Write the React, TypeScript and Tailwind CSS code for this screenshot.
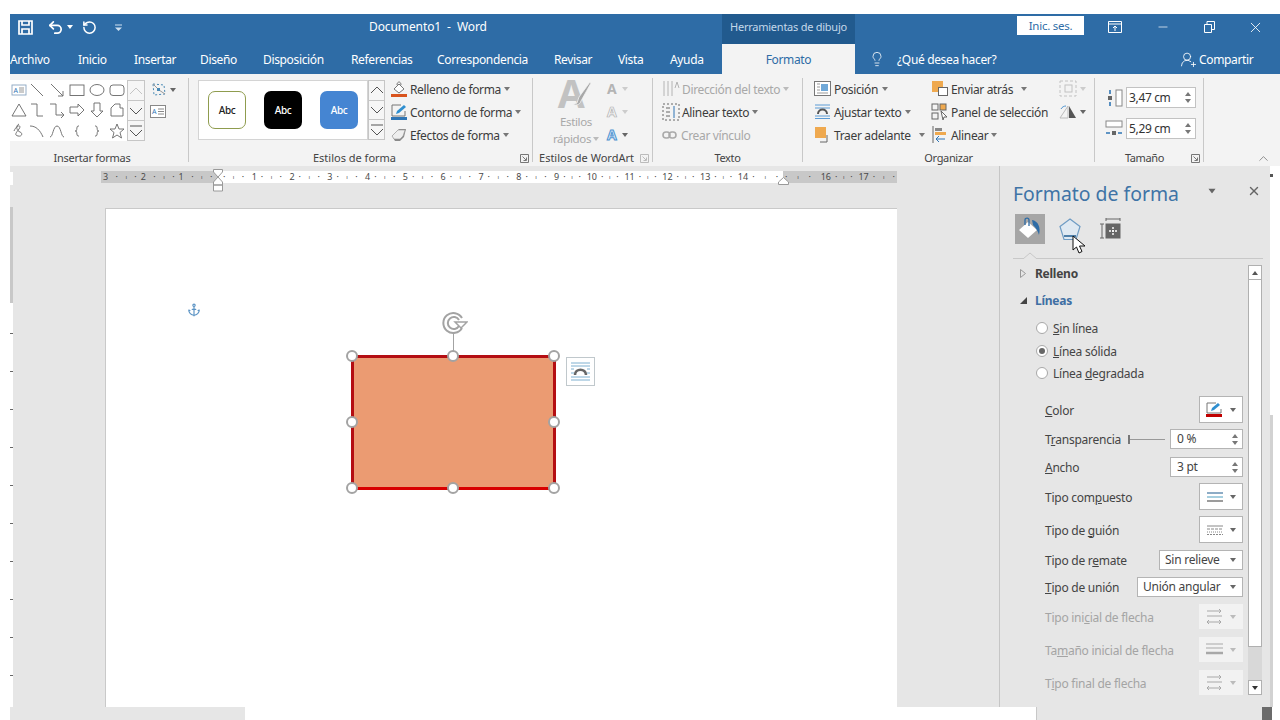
import type { ReactNode } from "react";
import { Anchor, ChevronUp, Lightbulb, Minus, RotateCcw, Undo2, UserRoundPlus, X } from "lucide-react";

function Caret({ className = "text-[#666]" }: { className?: string }) {
    return (
        <svg width="6" height="4" viewBox="0 0 6 4" className={`inline-block shrink-0 ${className}`}>
            <path d="M0 0h6L3 4z" fill="currentColor" />
        </svg>
    );
}

function Launcher({ dim = false }: { dim?: boolean }) {
    return (
        <svg width="9" height="9" viewBox="0 0 9 9" className="shrink-0" stroke={dim ? "#bbb" : "#777"} fill="none">
            <path d="M.5.5h8v8h-8z" />
            <path d="M2.5 2.5l3.5 3.5M6.5 3.5v3h-3" />
        </svg>
    );
}

const shapeIcons: ReactNode[] = [
    <g key="box"><rect x="1" y="3" width="14" height="10" stroke="#8aa5c0" fill="#fff" /><text x="2.5" y="10.5" fontSize="7" fill="#2f75b5" stroke="none">A</text><path d="M8 6h5M8 8h5M8 10h5" stroke="#8a8a8a" /></g>,
    <path key="line" d="M2 2l12 12" />,
    <g key="arrow"><path d="M2 2l12 12" /><path d="M14 9v5H9" /></g>,
    <rect key="rect" x="1" y="3" width="14" height="10.5" />,
    <ellipse key="oval" cx="8" cy="8" rx="7" ry="5.5" />,
    <rect key="round" x="1" y="3" width="14" height="10.5" rx="3" />,
    <path key="tri" d="M8 2l7 12H1z" />,
    <path key="elbow" d="M2 2h6v12h6" />,
    <g key="elbowa"><path d="M1 2h6v11h7" /><path d="M12 10l3 3-3 3" /></g>,
    <path key="right" d="M1 5h8V2l6 6-6 6v-3H1z" />,
    <path key="down" d="M5 1h6v8h3l-6 6-6-6h3z" />,
    <path key="flow" d="M2 14V6l4-4h5v4h3v8z" />,
    <path key="scrib" d="M3 8c3-7 8-6 5-2S3 12 7 13s5-3 2-4-5-6-1-8" />,
    <path key="curve" d="M1 3c6 0 10 4 13 11" />,
    <path key="scurve" d="M1 14C4 14 4 3 8 3s4 11 7 11" />,
    <path key="lb" d="M10 3H9C7.500 3 8 7 7.500 7.500S6 8 6 8s1 0 1.500.5S7.500 13 9 13h1" />,
    <path key="rb" d="M6 3h1c1.500 0 1 4 1.500 4.500S10 8 10 8s-1 0-1.500.5S8.500 13 7 13H6" />,
    <path key="star" d="M8 1l2 5h5l-4 3.500 1.500 5.500L8 12l-4.500 3L5 9.500 1 6h5z" />,
];

function SpinCell({ kind, dim = false }: { kind: "up" | "down" | "more"; dim?: boolean }) {
    const stroke = dim ? "#c4c4c4" : "#555";
    return (
        <div className="flex flex-1 items-center justify-center border border-[#c6c6c6] bg-[#f6f6f6] -mt-px first:mt-0">
            <svg width="14" height="14" viewBox="0 0 14 14" fill="none" stroke={stroke}>
                {kind === "more" && <path d="M1 2h12" />}
                <path d={kind === "up" ? "M1 10l6-6 6 6" : kind === "down" ? "M1 4l6 6 6-6" : "M1 6l6 6 6-6"} />
            </svg>
        </div>
    );
}

function FillIcon() {
    return (
        <svg width="18" height="18" viewBox="0 0 18 18" fill="none">
            <path d="M4 9l5-5 5 5-5 4z" fill="#fff" stroke="#777" />
            <path d="M7 5c0-4 4-4 4 0" stroke="#777" />
            <rect x="1" y="14" width="16" height="3" fill="#d9541e" />
        </svg>
    );
}

function OutlineIcon() {
    return (
        <svg width="18" height="18" viewBox="0 0 18 18" fill="none">
            <path d="M2 2h9M2 2v11h13V8" stroke="#777" />
            <path d="M6 11l1-3 7-6 2 2-7 6z" fill="#2f8fd0" />
            <rect x="1" y="14" width="16" height="3" fill="#2f75b5" />
        </svg>
    );
}

function EffectIcon() {
    return (
        <svg width="18" height="18" viewBox="0 0 18 18">
            <path d="M2 10l7-7h7l-2 8-4 4H5z" fill="#8a8a8a" />
            <path d="M2 10l6-6h7l-2 6-3 3H4z" fill="#eee" stroke="#999" strokeWidth=".6" />
        </svg>
    );
}

function StyleRow({ icon, label, caret = true, dim = false, gap = "gap-[3px]" }: { icon: ReactNode; label: string; caret?: boolean; dim?: boolean; gap?: string }) {
    return (
        <div className={`flex h-[23px] items-center whitespace-nowrap ${gap} ${dim ? "text-[#a8a8a8]" : "text-[#3c3c3c]"}`}>
            {icon}
            <span className="mt-[2px]">{label}</span>
            {caret && <Caret className={dim ? "ml-[1px] text-[#bbb]" : "ml-[1px] text-[#777]"} />}
        </div>
    );
}

function Group({ width, label, launcher, dimLauncher, labelPad = "", children }: { width: string; label: string; launcher?: boolean; dimLauncher?: boolean; labelPad?: string; children: ReactNode }) {
    return (
        <div className={`flex h-full shrink-0 flex-col ${width}`}>
            <div className="flex h-[76px]">{children}</div>
            <div className={`flex h-[16px] items-center text-[11px] text-[#444] ${labelPad}`}>
                <span className="flex-1 whitespace-nowrap text-center">{label}</span>
                {launcher && <Launcher dim={dimLauncher} />}
            </div>
        </div>
    );
}

const Sep = () => <div className="my-[4px] w-px shrink-0 bg-[#c8c8c8]" />;

function AbcButton({ className }: { className: string }) {
    return <div className={`flex h-[38px] w-[38px] items-center justify-center rounded-[7px] text-[10px] font-medium ${className}`}>Abc</div>;
}

function SizeInput({ value, icon }: { value: string; icon: ReactNode }) {
    return (
        <div className="flex items-center gap-[3px]">
            {icon}
            <div className="flex h-[21px] w-[70px] items-center justify-between border border-[#c2c2c2] bg-white pl-[2px] pr-[4px] text-[12px] text-[#333]">
                {value}
                <Spin />
            </div>
        </div>
    );
}

function Spin() {
    return (
        <span className="flex flex-col gap-[3px] text-[#666]">
            <Caret className="rotate-180 text-[#777]" />
            <Caret className="text-[#777]" />
        </span>
    );
}

function RulerCell({ n, lead = false, w = "w-[37.8px]" }: { n?: number; lead?: boolean; w?: string }) {
    const bits = [<span key="a">·</span>, <span key="b" className="text-[6px]">ı</span>, <span key="c">·</span>];
    const num = n !== undefined ? <span key="n">{n}</span> : null;
    return (
        <div className={`flex shrink-0 items-center justify-between px-[2px] ${w}`}>
            {lead ? [num, ...bits] : [...bits, num]}
        </div>
    );
}

function PanelRow({ children, right, className }: { children: ReactNode; right?: ReactNode; className: string }) {
    return (
        <div className={`flex items-center justify-between pl-[32px] pr-[5px] ${className}`}>
            <span className="mt-[2px] whitespace-nowrap">{children}</span>
            {right}
        </div>
    );
}

function Radio({ children, on = false, className }: { children: ReactNode; on?: boolean; className: string }) {
    return (
        <div className={`flex h-[18px] items-center gap-[5px] pl-[23px] ${className}`}>
            <span className="flex h-[12px] w-[12px] items-center justify-center rounded-full border border-[#a8a8a8] bg-white">
                {on && <span className="h-[6px] w-[6px] rounded-full bg-[#666]" />}
            </span>
            <span className="mt-[2px]">{children}</span>
        </div>
    );
}

function DropBtn({ icon, dim = false }: { icon: ReactNode; dim?: boolean }) {
    return (
        <div className={`flex h-full w-[44px] items-center justify-center gap-[7px] ${dim ? "bg-[#f2f2f2]" : "border border-[#b4b4b4] bg-white"}`}>
            {icon}
            <Caret className={dim ? "text-[#bbb]" : "text-[#666]"} />
        </div>
    );
}

function ArrowsIcon() {
    return (
        <svg width="17" height="17" viewBox="0 0 17 17" fill="none" stroke="#a8a8a8">
            <path d="M1 3h14l-2-2M15 3l-2 2M1 8h15M1 14h14M3 12l-2 2 2 2M13 12l2 2-2 2" />
        </svg>
    );
}

function Handle({ className }: { className: string }) {
    return <div className={`absolute h-[12px] w-[12px] rounded-full border-2 border-[#a3a3a3] bg-white ${className}`} />;
}

export default function App() {
    return (
        <div className="flex h-[720px] w-[1280px] flex-col overflow-hidden bg-white pl-[10px] pt-[14px] font-['Noto_Sans','Open_Sans',sans-serif] text-[12px] tracking-[-0.35px] text-[#444]">
            {/* barra de titulo */}
            <div className="flex h-[30px] shrink-0 items-center bg-[#2e6ca6] pb-[4px] text-white">
                <div className="flex w-[359px] shrink-0 items-center pl-[8px]">
                    <svg width="15" height="15" viewBox="0 0 15 15" fill="none" stroke="#fff" strokeWidth="1.7">
                        <path d="M1 1h13v13H1z" />
                        <path d="M4 1v4h7V1M4 14V9h7v5" />
                    </svg>
                    <Undo2 size={17} strokeWidth={2.4} className="ml-[14px]" />
                    <Caret className="ml-[3px] text-white" />
                    <RotateCcw size={15} strokeWidth={2.4} className="ml-[9px]" />
                    <svg width="9" height="7" viewBox="0 0 9 7" className="ml-[17px]" fill="none" stroke="#cfe0f0">
                        <path d="M1 1h7" />
                        <path d="M1 3.500h7L4.500 7z" fill="#cfe0f0" stroke="none" />
                    </svg>
                </div>
                <div className="w-[353px] shrink-0 whitespace-pre tracking-[-0.1px]">Documento1  -  Word</div>
                <div className="-mb-[4px] flex w-[133px] shrink-0 items-center justify-center self-stretch bg-[#215a8e] pb-[4px] text-[11px] tracking-[-0.25px] text-[#c4d8ea]">Herramientas de dibujo</div>
                <div className="ml-[162px] mt-[2px] flex h-[19px] w-[67px] shrink-0 items-center justify-center self-start bg-white text-[11.5px] tracking-[-0.25px] text-[#2e6ca6]">Inic. ses.</div>
                <div className="ml-[8px] flex w-[46px] shrink-0 justify-center">
                    <svg width="14" height="12" viewBox="0 0 14 12" fill="none" stroke="#fff">
                        <path d="M.5.5h13v11H.5zM.5 3h13" />
                        <path d="M7 10V5M5 7l2-2 2 2" />
                    </svg>
                </div>
                <div className="ml-[2px] flex w-[46px] shrink-0 justify-center"><Minus size={14} strokeWidth={1.2} /></div>
                <div className="flex w-[46px] shrink-0 justify-center">
                    <svg width="11" height="12" viewBox="0 0 11 12" fill="none" stroke="#fff">
                        <path d="M.5 3.500h7v8h-7zM3 3.500V.5h7.500v8H7.500" />
                    </svg>
                </div>
                <div className="flex w-[46px] shrink-0 justify-center"><X size={17} strokeWidth={1.2} /></div>
            </div>

            {/* pestanas */}
            <div className="flex h-[30px] shrink-0 items-center bg-[#2e6ca6] text-white">
                <div className="mt-[2px] flex w-[712px] shrink-0 gap-[27px] whitespace-nowrap">
                    <span className="w-[41px]">Archivo</span>
                    <span className="w-[29px]">Inicio</span>
                    <span className="w-[39px]">Insertar</span>
                    <span className="w-[36px]">Diseño</span>
                    <span className="w-[61px]">Disposición</span>
                    <span className="w-[59px]">Referencias</span>
                    <span className="w-[90px]">Correspondencia</span>
                    <span className="w-[37px]">Revisar</span>
                    <span className="w-[25px]">Vista</span>
                    <span className="w-[34px]">Ayuda</span>
                </div>
                <div className="flex h-full w-[133px] shrink-0 items-center justify-center bg-[#f3f3f3] pt-[2px] text-[#2e6ca6]">Formato</div>
                <Lightbulb size={16} strokeWidth={1.2} className="ml-[14px]" />
                <span className="ml-[12px] mt-[2px] w-[97px] whitespace-nowrap">¿Qué desea hacer?</span>
                <UserRoundPlus size={17} strokeWidth={1.2} className="ml-[186px]" />
                <span className="ml-[2px] mt-[2px]">Compartir</span>
            </div>

            {/* cinta */}
            <div className="flex h-[92px] shrink-0 bg-[#f3f3f3]">
                <Group width="w-[178px]" label="Insertar formas" labelPad="pr-[14px] tracking-[-0.25px]">
                    <div className="mt-[6px] flex h-[61px]">
                        <div className="grid h-full w-[117px] grid-cols-[17px_repeat(5,20px)] grid-rows-3 bg-white">
                            {shapeIcons.map((icon, i) => (
                                <div key={i} className="flex items-center justify-center">
                                    <svg width="16" height="16" viewBox="0 0 16 16" fill="none" stroke="#666" strokeWidth=".9">{icon}</svg>
                                </div>
                            ))}
                        </div>
                        <div className="flex w-[18px] flex-col">
                            <SpinCell kind="up" dim />
                            <SpinCell kind="down" />
                            <SpinCell kind="more" />
                        </div>
                    </div>
                    <div className="ml-[5px] mt-[8px] flex flex-col gap-[8px]">
                        <div className="flex items-center gap-[3px]">
                            <svg width="17" height="15" viewBox="0 0 17 15" fill="none">
                                <path d="M3 2l11 1 1 9-11 1z" stroke="#4a8ab5" strokeDasharray="2 2" />
                                <path d="M3 2l6 6 6 4" stroke="#999" />
                                <rect x="7" y="6" width="3" height="3" fill="#4a8ab5" />
                            </svg>
                            <Caret />
                        </div>
                        <svg width="16" height="13" viewBox="0 0 16 13" fill="none" stroke="#888">
                            <rect x=".5" y=".5" width="15" height="12" fill="#fff" />
                            <text x="2" y="9" fontSize="7" fill="#2f75b5" stroke="none">A</text>
                            <path d="M8 4h6M8 6.500h6M8 9h6" />
                        </svg>
                    </div>
                </Group>
                <Sep />
                <Group width="w-[343px]" label="Estilos de forma" launcher labelPad="pr-[3px] tracking-normal">
                    <div className="ml-[9px] mt-[6px] flex h-[60px]">
                        <div className="flex h-full w-[170px] items-center gap-[18px] border border-[#d4d4d4] bg-white px-[9px]">
                            <AbcButton className="border border-[#8f9c4e] bg-white text-[#222]" />
                            <AbcButton className="bg-black text-white" />
                            <AbcButton className="bg-[#4585d2] text-white" />
                        </div>
                        <div className="flex w-[17px] flex-col">
                            <SpinCell kind="up" />
                            <SpinCell kind="down" />
                            <SpinCell kind="more" />
                        </div>
                    </div>
                    <div className="ml-[5px] mt-[3px] flex flex-col">
                        <StyleRow icon={<FillIcon />} label="Relleno de forma" gap="gap-[2px]" />
                        <StyleRow icon={<OutlineIcon />} label="Contorno de forma" gap="gap-[2px]" />
                        <StyleRow icon={<EffectIcon />} label="Efectos de forma" gap="gap-[2px]" />
                    </div>
                </Group>
                <Sep />
                <Group width="w-[119px]" label="Estilos de WordArt" launcher dimLauncher labelPad="pr-[3px] tracking-normal">
                    <div className="ml-[13px] flex w-[60px] flex-col items-center text-[#a8a8a8]">
                        <svg width="44" height="33" viewBox="0 0 44 33" className="mt-[4px] -translate-x-[2px]">
                            <text x="19" y="30" textAnchor="middle" fontSize="39" fontWeight="700" fill="#c2c2c2">A</text>
                            <path d="M38 4L27 19l-2 6c-2 1-4 2-5 1 3 2 8 1 9-3L39 5z" fill="#a8a8a8" stroke="#f3f3f3" strokeWidth=".8" />
                        </svg>
                        <div className="mt-[2px] text-[11.5px] leading-[17px]">Estilos</div>
                        <div className="flex items-center gap-[2px] text-[11.5px] leading-[17px]">rápidos <Caret className="text-[#bbb]" /></div>
                    </div>
                    <div className="ml-[1px] mt-[3px] flex flex-col text-[14px]">
                        <div className="flex h-[23px] items-center gap-[6px] font-bold text-[#b4b4b4]">A <Caret className="text-[#ccc]" /></div>
                        <div className="flex h-[23px] items-center gap-[6px] font-bold text-transparent [-webkit-text-stroke:0.7px_#b0b0b0]">A <Caret className="text-[#ccc]" /></div>
                        <div className="flex h-[23px] items-center gap-[6px] font-bold text-[#dbeafa] [-webkit-text-stroke:1px_#4f94d0]">A <Caret className="text-[#666]" /></div>
                    </div>
                </Group>
                <Sep />
                <Group width="w-[149px]" label="Texto">
                    <div className="ml-[9px] mt-[3px] flex flex-col">
                        <StyleRow dim label="Dirección del texto" gap="gap-[2px]" icon={
                            <svg width="18" height="18" viewBox="0 0 18 18" fill="none" stroke="#b4b4b4"><path d="M2 1v15M6 1v15M10 1v15" /><path d="M13 8l2-6 2 6" /></svg>
                        } />
                        <StyleRow label="Alinear texto" gap="gap-[2px]" icon={
                            <svg width="18" height="18" viewBox="0 0 18 18" fill="none" stroke="#666"><path d="M1 1h16v16H1z" strokeDasharray="2 2" /><path d="M4 5h4M4 9h4M4 13h4" /><path d="M12 3v12" stroke="#2f75b5" /></svg>
                        } />
                        <StyleRow dim caret={false} label="Crear vínculo" gap="gap-[4px]" icon={
                            <svg width="15" height="10" viewBox="0 0 15 10" fill="none" stroke="#aaa" strokeWidth="1.600"><rect x="1" y="2" width="7" height="6" rx="3" /><rect x="7" y="2" width="7" height="6" rx="3" /></svg>
                        } />
                    </div>
                </Group>
                <Sep />
                <Group width="w-[291px]" label="Organizar">
                    <div className="ml-[11px] mt-[3px] flex w-[117px] shrink-0 flex-col">
                        <StyleRow label="Posición" icon={
                            <svg width="17" height="17" viewBox="0 0 17 17" fill="none"><rect x=".5" y="1.500" width="16" height="14" stroke="#777" fill="#fff" /><rect x="7" y="4" width="7" height="7" fill="#6fa8d8" /><path d="M3 4h3M3 7h3M3 10h3M3 13h11" stroke="#999" /></svg>
                        } />
                        <StyleRow label="Ajustar texto" icon={
                            <svg width="17" height="17" viewBox="0 0 17 17" fill="none"><path d="M1 2h15M1 5h15M1 13h15M1 15.500h15" stroke="#5b9bd5" /><path d="M4 11c0-6 9-6 9 0" stroke="#555" strokeWidth="2" /></svg>
                        } />
                        <div className="flex h-[23px] items-center whitespace-nowrap text-[#3c3c3c]">
                            <svg width="17" height="17" viewBox="0 0 17 17" fill="none"><rect x="1" y="1" width="11" height="11" fill="#efa94f" /><path d="M13 9v7H6" stroke="#666" /></svg>
                            <span className="ml-[3px] mt-[2px]">Traer adelante</span>
                            <Caret className="ml-[8px] text-[#777]" />
                        </div>
                    </div>
                    <div className="mt-[3px] flex w-[126px] shrink-0 flex-col">
                        <div className="flex h-[23px] items-center whitespace-nowrap text-[#3c3c3c]">
                            <svg width="18" height="17" viewBox="0 0 18 17" fill="none"><rect x="1" y="1" width="11" height="11" fill="#efa94f" /><rect x="7.500" y="7.500" width="9" height="8" fill="#fff" stroke="#666" /></svg>
                            <span className="ml-[2px] mt-[2px]">Enviar atrás</span>
                            <Caret className="ml-[8px] text-[#777]" />
                        </div>
                        <StyleRow caret={false} label="Panel de selección" gap="gap-[2px]" icon={
                            <svg width="18" height="17" viewBox="0 0 18 17" fill="none" stroke="#666"><rect x="1" y="1" width="6" height="6" /><rect x="1" y="10" width="6" height="6" /><rect x="9" y="1" width="6" height="6" fill="#efa94f" /><path d="M10 8l6 6-3 0-1 3z" fill="#fff" /></svg>
                        } />
                        <StyleRow label="Alinear" gap="gap-[2px]" icon={
                            <svg width="18" height="17" viewBox="0 0 18 17" fill="none"><path d="M2 0v17" stroke="#666" /><rect x="4" y="2" width="7" height="3" fill="#888" /><rect x="4" y="6" width="11" height="3" fill="#efa94f" /><path d="M14 13H5M8 10l-3 3 3 3" stroke="#2f75b5" /></svg>
                        } />
                    </div>
                    <div className="mt-[3px] flex flex-col pl-[2px]">
                        <div className="flex h-[23px] items-center gap-[3px]">
                            <svg width="18" height="17" viewBox="0 0 18 17" fill="none" stroke="#c2c2c2"><rect x="1" y="1" width="16" height="15" strokeDasharray="3 2" /><rect x="6" y="5" width="7" height="7" /></svg>
                            <Caret className="text-[#ccc]" />
                        </div>
                        <div className="flex h-[23px] items-center gap-[3px]">
                            <svg width="18" height="16" viewBox="0 0 18 16"><path d="M9 2v12H1z" fill="none" stroke="#bbb" /><path d="M10 2l7 12h-7z" fill="#555" /><path d="M2 5c1-2 3-3 5-3" fill="none" stroke="#4f94d0" /></svg>
                            <Caret />
                        </div>
                    </div>
                </Group>
                <Sep />
                <Group width="w-[108px]" label="Tamaño" launcher labelPad="pl-[3px] pr-[3px]">
                    <div className="ml-[10px] mt-[13px] flex flex-col gap-[10px]">
                        <SizeInput value="3,47 cm" icon={
                            <svg width="18" height="18" viewBox="0 0 18 18" fill="none"><rect x="11" y="1" width="6" height="16" stroke="#888" fill="#fff" /><path d="M5 1v4M5 13v4" stroke="#2f75b5" strokeWidth="1.600" /><rect x="3" y="7" width="4" height="4" fill="#666" /></svg>
                        } />
                        <SizeInput value="5,29 cm" icon={
                            <svg width="18" height="18" viewBox="0 0 18 18" fill="none"><rect x="1" y="1" width="16" height="6" stroke="#888" fill="#fff" /><path d="M1 13h4M13 13h4" stroke="#2f75b5" strokeWidth="1.600" /><rect x="7" y="11" width="4" height="4" fill="#666" /></svg>
                        } />
                    </div>
                </Group>
                <Sep />
                <div className="flex flex-1 items-end justify-end pr-[9px]">
                    <ChevronUp size={15} strokeWidth={1} className="text-[#555]" />
                </div>
            </div>

            {/* documento y panel */}
            <div className="flex h-[541px] shrink-0">
                <div className="relative flex w-[989px] shrink-0 bg-[#e6e6e6]">
                    <div className="flex w-[3px] shrink-0 flex-col">
                        <div className="mt-[6px] h-[13px] bg-white" />
                        <div className="mt-[22px] h-[96px] bg-[#c8c8c8]" />
                        <div className="flex flex-1 flex-col gap-[37px] bg-white pt-[30px]">
                            {Array.from({ length: 10 }).map((_, i) => <div key={i} className="h-px shrink-0 bg-[#666]" />)}
                        </div>
                    </div>
                    <div className="flex flex-1 flex-col">
                        <div className="ml-[88px] mt-[5px] flex h-[12px] shrink-0 text-[9px] leading-[12px] tracking-normal text-[#4a4a4a]">
                            <div className="flex w-[116px] shrink-0 bg-[#c8c8c8]">
                                {[3, 2, 1].map(n => <RulerCell key={n} n={n} lead />)}
                            </div>
                            <div className="flex w-[566px] shrink-0 overflow-hidden bg-white pl-[4px]">
                                {Array.from({ length: 14 }).map((_, i) => <RulerCell key={i} n={i + 1} />)}
                                <RulerCell w="w-[30px]" />
                            </div>
                            <div className="flex w-[114px] shrink-0 overflow-hidden bg-[#c8c8c8]">
                                <RulerCell n={16} w="w-[50px]" />
                                <RulerCell n={17} />
                                <RulerCell w="w-[26px]" />
                            </div>
                        </div>
                        <div className="relative ml-[92px] mt-[25px] w-[792px] flex-1 border-l border-t border-[#c9c9c9] bg-white">
                            <Anchor size={14} strokeWidth={2} className="absolute left-[81px] top-[94px] text-[#5b93c4]" />
                            {/* forma seleccionada */}
                            <div className="absolute left-[245px] top-[146px] h-[135px] w-[205px] border-[3px] border-[#b40e12] border-b-[#d80000] bg-[#eb9b72]" />
                            <div className="absolute left-[347px] top-[124px] h-[24px] w-px bg-[#a3a3a3]" />
                            <svg width="26" height="24" viewBox="0 0 26 24" fill="none" stroke="#a3a3a3" strokeWidth="2" className="absolute left-[336px] top-[102px]">
                                <path d="M20 17a10 10 0 1 1 0-10" />
                                <path d="M17 15a6 6 0 1 1 0-6" />
                                <path d="M13 11h12l-6 6z" fill="#fff" strokeWidth="1.500" />
                            </svg>
                            <Handle className="left-[240px] top-[141px]" />
                            <Handle className="left-[341px] top-[141px]" />
                            <Handle className="left-[442px] top-[141px]" />
                            <Handle className="left-[240px] top-[207px]" />
                            <Handle className="left-[442px] top-[207px]" />
                            <Handle className="left-[240px] top-[273px]" />
                            <Handle className="left-[341px] top-[273px]" />
                            <Handle className="left-[442px] top-[273px]" />
                            <div className="absolute left-[460px] top-[148px] flex h-[29px] w-[29px] items-center justify-center border border-[#c0c8cc] bg-white">
                                <svg width="21" height="21" viewBox="0 0 21 21" fill="none">
                                    <path d="M1 2h19M1 5h19M1 16h19M1 19h19M1 8h3M17 8h3M1 12h3M17 12h3" stroke="#7fb0d0" />
                                    <path d="M5 14c0-7 11-7 11 0" stroke="#666" strokeWidth="2.600" />
                                </svg>
                            </div>
                        </div>
                    </div>
                    <svg width="10" height="23" viewBox="0 0 10 23" fill="#fff" stroke="#999" className="absolute left-[203px] top-[3px]">
                        <path d="M.5.5h9V3L5 8 .5 3zM5 8l4.500 5v3h-9v-3zM.5 16h9v6h-9z" />
                    </svg>
                    <svg width="11" height="8" viewBox="0 0 11 8" fill="#fff" stroke="#999" className="absolute left-[768px] top-[11px]">
                        <path d="M.5 7.500V5L5.500.5 10.500 5v2.500z" />
                    </svg>
                </div>

                <div className="relative flex w-[271px] shrink-0 flex-col border-l border-[#c6c6c6] bg-[#e6e6e6]">
                    <div className="ml-[13px] mt-[14px] flex h-[28px] shrink-0 items-center">
                        <span className="w-[196px] whitespace-nowrap text-[19.4px] tracking-normal text-[#3f74a6]">Formato de forma</span>
                        <Caret className="mb-[6px] scale-125 text-[#666]" />
                        <X size={14} strokeWidth={2.4} className="mb-[6px] ml-[32px] text-[#666]" />
                    </div>
                    <div className="ml-[15px] mt-[6px] flex h-[30px] shrink-0 items-center">
                        <div className="flex h-[30px] w-[30px] items-center justify-center bg-[#a6a6a6]">
                            <svg width="26" height="26" viewBox="0 0 26 26" fill="none">
                                <path d="M11 6l9 8-9 8-9-8z" fill="#fff" />
                                <path d="M8 9V4c0-2.500 4-2.500 4 0v6" stroke="#2e6ca6" strokeWidth="1.300" />
                                <path d="M15 4c6 1 9 7 7 15-1-4-3-7-6-10z" fill="#2e6ca6" />
                            </svg>
                        </div>
                        <svg width="24" height="24" viewBox="0 0 24 24" className="ml-[13px]" fill="#dfe9f2" stroke="#6f9cc4" strokeWidth="1.200">
                            <path d="M12 2l10 7.500-4 13H6l-4-13z" />
                            <path d="M6 19h12" stroke="#4f7fa8" strokeWidth="2" />
                        </svg>
                        <svg width="22" height="22" viewBox="0 0 22 22" className="ml-[17px]" fill="none" stroke="#666">
                            <path d="M7 1h14M7 0v3M21 0v3M1 6h4M3 6v14M1 20h4" />
                            <rect x="7" y="6" width="14" height="14" fill="#666" />
                            <path d="M14 9v8M10 13h8" stroke="#fff" strokeWidth="1.400" strokeDasharray="2 1" />
                        </svg>
                    </div>
                    {/* cursor del raton */}
                    <svg width="16" height="20" viewBox="0 0 16 20" fill="#fff" stroke="#111" className="absolute left-[72px] top-[69px]">
                        <path d="M1 1v14l3.500-3 2.500 6 3-1.500-2.500-5.500H13z" />
                    </svg>
                    <div className="relative ml-[13px] mr-[7px] mt-[14px] h-px shrink-0 bg-[#c8c8c8]">
                        <svg width="14" height="7" viewBox="0 0 14 7" className="absolute left-[10px] top-[-6px]" fill="#e6e6e6" stroke="#c8c8c8">
                            <path d="M0 7l7-6 7 6" />
                        </svg>
                    </div>
                    <div className="flex flex-1">
                        <div className="ml-[13px] w-[235px] shrink-0 text-[12px] tracking-[-0.25px] text-[#444]">
                            <div className="mt-[5px] flex h-[18px] items-center pl-[7px] font-bold">
                                <svg width="6" height="9" viewBox="0 0 6 9" fill="none" stroke="#999" className="mr-[9px]"><path d="M.5.5v8l5-4z" /></svg>
                                <span className="mt-[2px]">Relleno</span>
                            </div>
                            <div className="mt-[9px] flex h-[18px] items-center pl-[7px] font-bold text-[#3f6fa3]">
                                <svg width="7" height="7" viewBox="0 0 7 7" fill="#444" className="mr-[8px]"><path d="M7 0v7H0z" /></svg>
                                <span className="mt-[2px]">Líneas</span>
                            </div>
                            <Radio className="mt-[10px]"><u>S</u>in línea</Radio>
                            <Radio on className="mt-[5px]"><u>L</u>ínea sólida</Radio>
                            <Radio className="mt-[4px]">Línea <u>d</u>egradada</Radio>

                            <PanelRow className="mt-[14px] h-[27px]" right={<DropBtn icon={
                                <svg width="17" height="16" viewBox="0 0 17 16" fill="none"><path d="M1 1h9M1 1v10h14V7" stroke="#777" /><path d="M5 9l1-3 6-5 2 2-6 5z" fill="#2f8fd0" /><rect x="0" y="12" width="16" height="3" fill="#c00000" /></svg>
                            } />}><u>C</u>olor</PanelRow>
                            <PanelRow className="mt-[6px] h-[20px]" right={
                                <div className="flex h-full items-center">
                                    <div className="mr-[5px] flex w-[37px] items-center">
                                        <span className="h-[9px] w-[2px] bg-[#777]" />
                                        <span className="h-px flex-1 bg-[#999]" />
                                    </div>
                                    <div className="flex h-full w-[73px] items-center justify-between border border-[#b4b4b4] bg-white pl-[6px] pr-[4px]">0 %<Spin /></div>
                                </div>
                            }>T<u>r</u>ansparencia</PanelRow>
                            <PanelRow className="mt-[8px] h-[20px]" right={
                                <div className="flex h-full w-[73px] items-center justify-between border border-[#b4b4b4] bg-white pl-[6px] pr-[4px]">3 pt<Spin /></div>
                            }><u>A</u>ncho</PanelRow>
                            <PanelRow className="mt-[6px] h-[27px]" right={<DropBtn icon={
                                <svg width="16" height="10" viewBox="0 0 16 10" fill="none"><path d="M0 1h16" stroke="#4f7fa8" strokeWidth="1.300" /><path d="M0 5h16" stroke="#4f9fc0" strokeWidth="1" /><path d="M0 9h16" stroke="#666" strokeWidth="1.300" /></svg>
                            } />}>Tipo com<u>p</u>uesto</PanelRow>
                            <PanelRow className="mt-[6px] h-[27px]" right={<DropBtn icon={
                                <svg width="16" height="10" viewBox="0 0 16 10" fill="none" stroke="#888"><path d="M0 1h16" /><path d="M0 4h16" strokeDasharray="3 1" /><path d="M0 7h16" strokeDasharray="1 1" /><path d="M0 9.500h16" strokeDasharray="2 1" /></svg>
                            } />}>Tipo de <u>g</u>uión</PanelRow>
                            <PanelRow className="mt-[7px] h-[20px]" right={
                                <div className="flex h-full w-[84px] items-center justify-between border border-[#b4b4b4] bg-white pl-[5px] pr-[6px]">Sin relieve<Caret /></div>
                            }>Tipo de r<u>e</u>mate</PanelRow>
                            <PanelRow className="mt-[7px] h-[20px]" right={
                                <div className="flex h-full w-[106px] items-center justify-between border border-[#b4b4b4] bg-white pl-[5px] pr-[6px]">Unión angular<Caret /></div>
                            }><u>T</u>ipo de unión</PanelRow>
                            <div className="text-[#a4a4a4]">
                                <PanelRow className="mt-[7px] h-[25px]" right={<DropBtn dim icon={<ArrowsIcon />} />}>Tipo ini<u>c</u>ial de flecha</PanelRow>
                                <PanelRow className="mt-[8px] h-[25px]" right={<DropBtn dim icon={
                                    <svg width="17" height="13" viewBox="0 0 17 13" fill="none" stroke="#a8a8a8"><path d="M0 1h17M0 5h17" /><path d="M0 10h17" strokeWidth="2.500" /></svg>
                                } />}>Ta<u>m</u>año inicial de flecha</PanelRow>
                                <PanelRow className="mt-[8px] h-[25px]" right={<DropBtn dim icon={<ArrowsIcon />} />}>T<u>i</u>po final de flecha</PanelRow>
                            </div>
                        </div>
                        <div className="mt-[6px] flex h-[430px] w-[14px] shrink-0 flex-col">
                            <div className="flex h-[15px] items-center justify-center border border-[#b0b0b0] bg-white"><Caret className="rotate-180 text-[#555]" /></div>
                            <div className="h-[367px] border-x border-b border-[#b0b0b0] bg-white" />
                            <div className="flex-1 bg-[#d8d8d8]" />
                            <div className="flex h-[15px] items-center justify-center border border-[#b0b0b0] bg-white"><Caret className="text-[#333]" /></div>
                        </div>
                    </div>
                </div>
                <div className="flex flex-1 flex-col">
                    <div className="mt-[8px] h-[3px] w-[3px] bg-[#555]" />
                    <div className="mt-[238px] w-[3px] flex-1 bg-[#d2d2d2]" />
                </div>
            </div>

            {/* barra de desplazamiento inferior */}
            <div className="flex h-[13px] shrink-0">
                <div className="w-[235px] bg-[#e6e6e6]" />
                <div className="w-[791px] bg-white" />
                <div className="w-[226px] border-l border-[#c8c8c8] bg-[#e6e6e6]" />
                <div className="w-[10px] bg-[#6b6b6b]" />
            </div>
        </div>
    );
}
